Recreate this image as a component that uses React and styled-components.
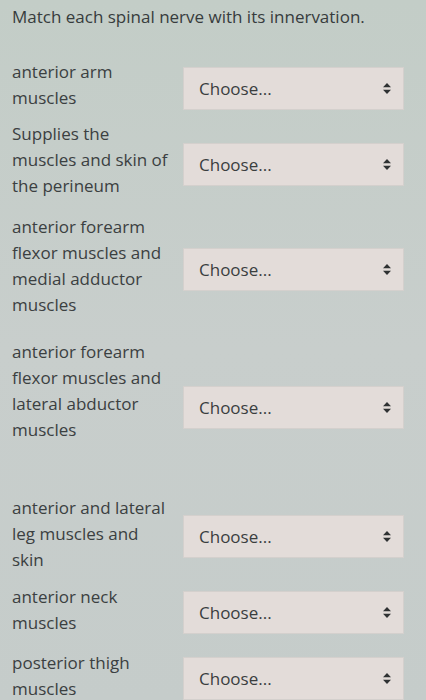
import React from "react";
import styled, { createGlobalStyle } from "styled-components";

const GlobalStyle = createGlobalStyle`
  html, body {
    margin: 0;
    padding: 0;
    background: #c6cdca;
  }
  body {
    font-family: "Open Sans", "Noto Sans", sans-serif;
    color: #3b4041;
  }
`;

const Page = styled.div`
  width: 426px;
  height: 700px;
  overflow: hidden;
  padding: 5px 0 0 12px;
  box-sizing: border-box;
  background: linear-gradient(180deg, #c3cdc7 0%, #c8cecc 50%, #c5ccca 100%);
`;

const Title = styled.h1`
  margin: 0;
  font-size: 17px;
  font-weight: 400;
  line-height: 24px;
  color: #373c3d;
  white-space: nowrap;
`;

const List = styled.div`
  display: flex;
  flex-direction: column;
  margin-top: 30px;
`;

const Row = styled.div`
  display: flex;
  align-items: center;
  margin-top: ${(p) => p.$gap || 0}px;
`;

const Label = styled.div`
  width: 164px;
  flex: none;
  font-size: 17px;
  line-height: 26px;
  color: #3b4041;
  white-space: nowrap;
`;

const Select = styled.div`
  margin-left: 7px;
  width: 221px;
  height: 43px;
  box-sizing: border-box;
  display: flex;
  align-items: center;
  justify-content: space-between;
  padding: 0 12px 0 15px;
  background: #e3dcd9;
  border: 1px solid #d4d0cd;
  font-size: 17px;
  color: #3a3e3f;
  transform: translateY(${(p) => p.$shift || 0}px);
`;

const Arrows = () => (
  <svg width="8" height="11" viewBox="0 0 8 11">
    <path d="M4 0 L8 4.3 H0 Z M4 11 L8 6.7 H0 Z" fill="#2f3233" />
  </svg>
);

const rows = [
  { text: ["anterior arm", "muscles"], gap: 0, shift: 3 },
  { text: ["Supplies the", "muscles and skin of", "the perineum"], gap: 10, shift: 4 },
  { text: ["anterior forearm", "flexor muscles and", "medial adductor", "muscles"], gap: 15, shift: 3 },
  { text: ["anterior forearm", "flexor muscles and", "lateral abductor", "muscles"], gap: 21, shift: 16 },
  { text: ["anterior and lateral", "leg muscles and", "skin"], gap: 52, shift: 2 },
  { text: ["anterior neck", "muscles"], gap: 11, shift: 2 },
  { text: ["posterior thigh", "muscles"], gap: 14, shift: 2 },
];

export default function App() {
  return (
    <Page>
      <GlobalStyle />
      <Title>Match each spinal nerve with its innervation.</Title>
      <List>
        {rows.map((r, i) => (
          <Row key={i} $gap={r.gap}>
            <Label>
              {r.text.map((t, j) => (
                <div key={j}>{t}</div>
              ))}
            </Label>
            <Select $shift={r.shift}>
              <span>Choose...</span>
              <Arrows />
            </Select>
          </Row>
        ))}
      </List>
    </Page>
  );
}
